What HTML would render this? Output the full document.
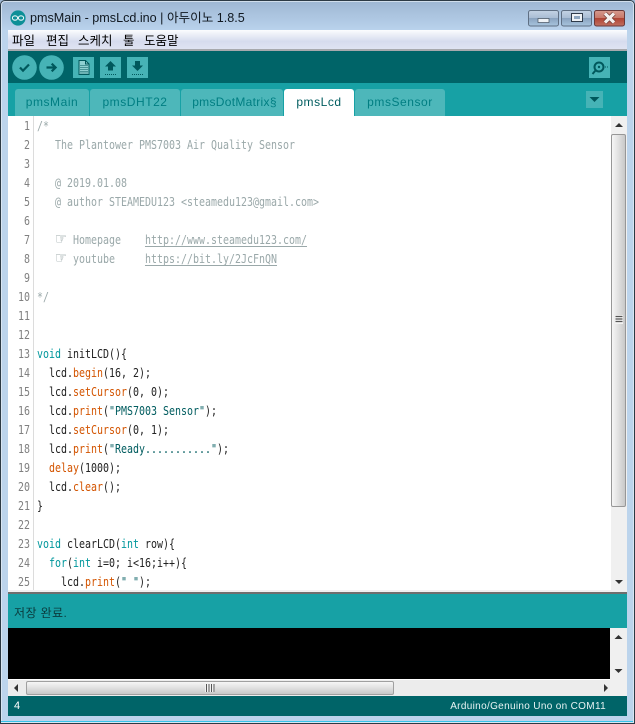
<!DOCTYPE html>
<html><head><meta charset="utf-8">
<style>
html,body{margin:0;padding:0}
body{width:635px;height:724px;overflow:hidden;position:relative;background:#bcd4ec;font-family:"Liberation Sans","Noto Sans CJK KR",sans-serif}
.a{position:absolute}
#top{left:0;top:0;width:635px;height:30px;background:linear-gradient(#9db6d2,#b9d2ec)}
#out{left:0;top:0;width:633px;height:722px;border:1px solid #2c3a45;border-radius:5px 5px 0 0}
#out2{left:1px;top:1px;width:631px;height:720px;border:1px solid #e6eef6;border-radius:4px 4px 0 0;opacity:.7}
#cy{left:1px;top:721px;width:632px;height:1px;background:#35c3ea}
#title{left:30px;top:10px;font-size:12.6px;color:#101820;white-space:nowrap;line-height:16px}
#menu{left:8px;top:30px;width:619px;height:19px;background:linear-gradient(#fbfcfe,#eef1f8 20%,#d6dcee 60%,#dfe3f2)}
#mline{left:8px;top:49px;width:619px;height:2px;background:#a7a9ad}
.m{position:absolute;top:33px;font-size:12.5px;line-height:16px;color:#000;white-space:nowrap}
#tool{left:8px;top:51px;width:619px;height:32px;background:#006468}
#strip{left:8px;top:83px;width:619px;height:33px;background:#17a1a5}
.t{position:absolute;top:89px;height:27px;background:#4db7ba;border-radius:3px 3px 0 0;color:#007e82;font-size:12px;letter-spacing:.55px;line-height:26px;text-align:center;white-space:nowrap}
.b{position:absolute;top:57px;width:21px;height:21px;background:#46b3b6}
#ed{left:8px;top:116px;width:603px;height:476px;background:#fff;overflow:hidden}
#gut{left:33px;top:116px;width:1px;height:476px;background:#dcdcdc}
.n{position:absolute;left:8px;width:22px;text-align:right;font:12px/19px "DejaVu Sans Mono",monospace;color:#808080;transform:scaleX(.83);transform-origin:right center}
.l{position:absolute;left:37px;width:720px;white-space:pre;font:12px/19px "DejaVu Sans Mono","Noto Sans CJK KR",monospace;color:#222;transform:scaleX(.8306);transform-origin:left center}
.c{color:#9aa8a9}.k{color:#00979c}.f{color:#d35400}.s{color:#005c5f}
.h{display:inline-block;width:14.4px;text-align:left;font:16px/0 "DejaVu Sans",sans-serif;color:#7f8f90}
u{text-decoration-thickness:1px;text-underline-offset:2px}
#sv{left:611px;top:116px;width:16px;height:476px;background:#f0f0f0}
#th{left:611px;top:134px;height:373px;background:linear-gradient(90deg,#f6f6f6,#e0e0e0 50%,#c8c8c8);border:1px solid #979797;box-sizing:border-box;width:15px;border-radius:2px}
#sep{left:8px;top:592px;width:619px;height:2px;background:#6e6e6e}
#sepw{left:8px;top:590px;width:619px;height:2px;background:#f0f0f0}
#msg{left:8px;top:594px;width:619px;height:34px;background:#17a1a5}
#con{left:8px;top:628px;width:602px;height:51px;background:#000}
#cs{left:610px;top:628px;width:17px;height:68px;background:#f0f0f0}
#hs{left:8px;top:680px;width:602px;height:16px;background:#ececec}
#hw{left:8px;top:679px;width:602px;height:1px;background:#fff}
#hth{left:26px;top:681px;width:368px;height:14px;background:linear-gradient(#f6f6f6,#e0e0e0 50%,#c8c8c8);border:1px solid #a0a0a0;box-sizing:border-box;border-radius:2px}
#st{left:8px;top:696px;width:619px;height:20px;background:#006468}
</style></head><body>
<div class="a" id="top"></div>
<div class="a" id="out"></div><div class="a" id="out2"></div><div class="a" id="cy"></div>

<svg class="a" style="left:10px;top:10px" width="16" height="16" viewBox="0 0 16 16">
<circle cx="8" cy="8" r="7.6" fill="#0c8f97"/>
<ellipse cx="5" cy="8" rx="2.6" ry="2.2" fill="none" stroke="#e8f6f6" stroke-width="1.1"/>
<ellipse cx="11" cy="8" rx="2.6" ry="2.2" fill="none" stroke="#e8f6f6" stroke-width="1.1"/>
</svg>
<div class="a" id="title">pmsMain - pmsLcd.ino | 아두이노 1.8.5</div>

<svg class="a" style="left:528px;top:10px" width="98" height="17" viewBox="0 0 98 17">
<defs>
<linearGradient id="wb" x1="0" y1="0" x2="0" y2="1"><stop offset="0" stop-color="#c4d3e4"/><stop offset=".48" stop-color="#a9bdd4"/><stop offset=".5" stop-color="#8aa3bf"/><stop offset="1" stop-color="#a8c4de"/></linearGradient>
<linearGradient id="wr" x1="0" y1="0" x2="0" y2="1"><stop offset="0" stop-color="#d69a8e"/><stop offset=".48" stop-color="#c8796a"/><stop offset=".5" stop-color="#b04434"/><stop offset="1" stop-color="#c07060"/></linearGradient>
</defs>
<rect x=".5" y=".5" width="30" height="15.5" rx="2" fill="url(#wb)" stroke="#5f6f83"/>
<rect x="33.5" y=".5" width="30" height="15.5" rx="2" fill="url(#wb)" stroke="#5f6f83"/>
<rect x="66.5" y=".5" width="30" height="15.5" rx="2" fill="url(#wr)" stroke="#6a3a3a"/>
<rect x="10" y="8.5" width="11" height="4" fill="#eef2f6" stroke="#44505e" stroke-width=".7"/>
<rect x="43.5" y="3.5" width="11" height="8" fill="#eef2f6" stroke="#2f3b4a" stroke-width="1"/>
<rect x="46" y="6" width="6" height="3" fill="#8ea6c0"/>
<path d="M77 3.5 L86 12.5 M86 3.5 L77 12.5" stroke="#6e3a34" stroke-width="4.6"/>
<path d="M77 3.5 L86 12.5 M86 3.5 L77 12.5" stroke="#f4f0ee" stroke-width="3.2"/>
</svg>

<div class="a" id="menu"></div><div class="a" id="mline"></div>
<div class="m" style="left:12px">파일</div>
<div class="m" style="left:46px">편집</div>
<div class="m" style="left:78px">스케치</div>
<div class="m" style="left:123px">툴</div>
<div class="m" style="left:144px">도움말</div>

<div class="a" id="tool"></div>
<svg class="a" style="left:12px;top:55px" width="52" height="25" viewBox="0 0 52 25">
<circle cx="12.5" cy="12.5" r="12.3" fill="#46b3b6"/>
<circle cx="39.5" cy="12.5" r="12.3" fill="#46b3b6"/>
<path d="M8 12.5 L11 15.7 L17 9.5" fill="none" stroke="#00585c" stroke-width="2.2"/>
<path d="M34.5 12.5 H43 M39.7 8.7 L43.6 12.5 L39.7 16.3" fill="none" stroke="#00585c" stroke-width="2.2"/>
</svg>
<div class="b" style="left:73px"></div>
<div class="b" style="left:100px"></div>
<div class="b" style="left:127px"></div>
<div class="b" style="left:589px"></div>
<svg class="a" style="left:73px;top:57px" width="75" height="21" viewBox="0 0 75 21">
<path d="M6 3.5 H12.5 L16 7 V17.5 H6 Z" fill="#8fd0d2" stroke="#00585c" stroke-width="1"/>
<path d="M12.5 3.5 V7 H16" fill="none" stroke="#00585c" stroke-width="1"/>
<path d="M7.5 8.5 H14.5 M7.5 10.5 H14.5 M7.5 12.5 H14.5 M7.5 14.5 H14.5 M7.5 16 H14.5" stroke="#00585c" stroke-width="1" stroke-dasharray="1 1"/>
<path d="M37.5 4 L43 9.5 H40 V13.5 H35 V9.5 H32 Z" fill="#00585c"/>
<path d="M32 17.5 H43" stroke="#00585c" stroke-width="1" stroke-dasharray="1 1"/>
<path d="M64.5 14 L70 8.5 H67 V4 H62 V8.5 H59 Z" fill="#00585c"/>
<path d="M59 17.5 H70" stroke="#00585c" stroke-width="1" stroke-dasharray="1 1"/>
</svg>
<svg class="a" style="left:589px;top:57px" width="21" height="21" viewBox="0 0 21 21">
<circle cx="10" cy="10" r="4.5" fill="none" stroke="#00585c" stroke-width="2"/>
<circle cx="10" cy="10" r="1.2" fill="#00585c"/>
<path d="M6.5 13.5 L3.5 17" stroke="#00585c" stroke-width="2"/>
<path d="M16 10 H20" stroke="#00585c" stroke-width="1" stroke-dasharray="1 1"/>
</svg>

<div class="a" id="strip"></div>
<div class="t" style="left:15px;width:74px">pmsMain</div>
<div class="t" style="left:90px;width:90px">pmsDHT22</div>
<div class="t" style="left:181px;width:102px;text-indent:5px;letter-spacing:.3px">pmsDotMatrix§</div>
<div class="t" style="left:284px;width:70px;background:#fff;color:#005c5f">pmsLcd</div>
<div class="t" style="left:355px;width:90px">pmsSensor</div>
<div class="a" style="left:586px;top:91px;width:17px;height:17px;background:#46b3b6"></div>
<svg class="a" style="left:586px;top:91px" width="17" height="17"><path d="M3.5 6 H13.5 L8.5 11 Z" fill="#00585c"/></svg>

<div class="a" id="ed"></div>
<div class="a" id="gut"></div>

<div class="n" style="top:117px">1</div><div class="l c" style="top:117px">/*</div>
<div class="n" style="top:136px">2</div><div class="l c" style="top:136px">   The Plantower PMS7003 Air Quality Sensor</div>
<div class="n" style="top:155px">3</div>
<div class="n" style="top:174px">4</div><div class="l c" style="top:174px">   @ 2019.01.08</div>
<div class="n" style="top:193px">5</div><div class="l c" style="top:193px">   @ author STEAMEDU123 &lt;steamedu123@gmail.com&gt;</div>
<div class="n" style="top:212px">6</div>
<div class="n" style="top:231px">7</div><div class="l c" style="top:231px">   <span class="h">☞</span> Homepage    <u>http://www.steamedu123.com/</u></div>
<div class="n" style="top:250px">8</div><div class="l c" style="top:250px">   <span class="h">☞</span> youtube     <u>https://bit.ly/2JcFnQN</u></div>
<div class="n" style="top:269px">9</div>
<div class="n" style="top:288px">10</div><div class="l c" style="top:288px">*/</div>
<div class="n" style="top:307px">11</div>
<div class="n" style="top:326px">12</div>
<div class="n" style="top:345px">13</div><div class="l" style="top:345px"><span class="k">void</span> initLCD(){</div>
<div class="n" style="top:364px">14</div><div class="l" style="top:364px">  lcd.<span class="f">begin</span>(16, 2);</div>
<div class="n" style="top:383px">15</div><div class="l" style="top:383px">  lcd.<span class="f">setCursor</span>(0, 0);</div>
<div class="n" style="top:402px">16</div><div class="l" style="top:402px">  lcd.<span class="f">print</span>(<span class="s">"PMS7003 Sensor"</span>);</div>
<div class="n" style="top:421px">17</div><div class="l" style="top:421px">  lcd.<span class="f">setCursor</span>(0, 1);</div>
<div class="n" style="top:440px">18</div><div class="l" style="top:440px">  lcd.<span class="f">print</span>(<span class="s">"Ready..........."</span>);</div>
<div class="n" style="top:459px">19</div><div class="l" style="top:459px">  <span class="f">delay</span>(1000);</div>
<div class="n" style="top:478px">20</div><div class="l" style="top:478px">  lcd.<span class="f">clear</span>();</div>
<div class="n" style="top:497px">21</div><div class="l" style="top:497px">}</div>
<div class="n" style="top:516px">22</div>
<div class="n" style="top:535px">23</div><div class="l" style="top:535px"><span class="k">void</span> clearLCD(<span class="k">int</span> row){</div>
<div class="n" style="top:554px">24</div><div class="l" style="top:554px">  <span class="k">for</span>(<span class="k">int</span> i=0; i&lt;16;i++){</div>
<div class="n" style="top:573px">25</div><div class="l" style="top:573px">    lcd.<span class="f">print</span>(<span class="s">" "</span>);</div>

<div class="a" id="sv"></div>
<div class="a" id="th"></div>
<svg class="a" style="left:611px;top:116px" width="16" height="476">
<path d="M8 7 L12 11 H4 Z" fill="#333"/>
<path d="M4 464 H12 L8 468 Z" fill="#333"/>
<rect x="4" y="199" width="8" height="9" fill="#f2f2f2"/>
<path d="M4.5 200.5 H11.5 M4.5 203 H11.5 M4.5 205.5 H11.5" stroke="#555" stroke-width="1.2"/>
</svg>

<div class="a" id="sepw"></div><div class="a" id="sep"></div>
<div class="a" id="msg"></div>
<div class="a" style="left:14px;top:605px;font-size:12px;line-height:16px;color:#0b3b3d;letter-spacing:.4px">저장 완료.</div>
<div class="a" id="con"></div>
<div class="a" id="cs"></div>
<div class="a" id="hw"></div>
<div class="a" id="hs"></div>
<div class="a" id="hth"></div>
<svg class="a" style="left:8px;top:680px" width="619" height="16">
<path d="M6 8 L10 4 V12 Z" fill="#333"/>
<rect x="197" y="3" width="10" height="9" fill="#f2f2f2"/>
<path d="M198.5 4 V12 M201 4 V12 M203.5 4 V12 M206 4 V12" stroke="#555" stroke-width="1"/>
<path d="M596 4 L600 8 L596 12 Z" fill="#333"/>
</svg>
<svg class="a" style="left:610px;top:628px" width="17" height="52">
<path d="M8.5 7 L12.5 11 H4.5 Z" fill="#333"/>
<path d="M4.5 41 H12.5 L8.5 45 Z" fill="#333"/>
</svg>
<div class="a" id="st"></div>
<div class="a" style="left:14px;top:699px;font-size:11px;line-height:14px;color:#fff">4</div>
<div class="a" style="right:29px;top:700px;font-size:10px;line-height:13px;color:#e8f4f4;letter-spacing:.33px;white-space:nowrap">Arduino/Genuino Uno on COM11</div>
</body></html>
